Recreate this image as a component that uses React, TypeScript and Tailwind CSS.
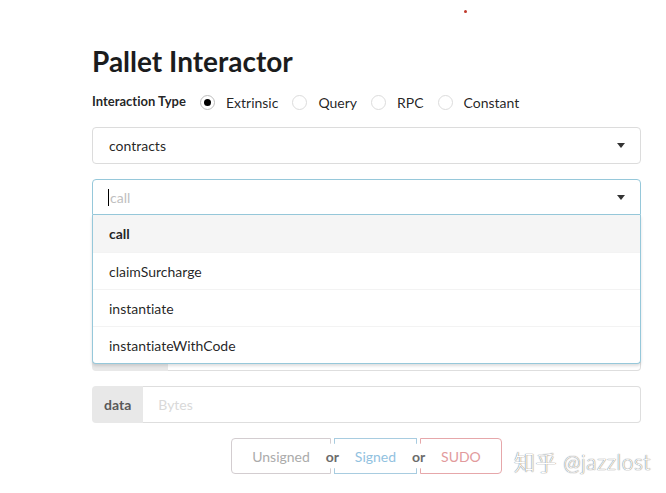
import React from 'react';

const methods = ['call', 'claimSurcharge', 'instantiate', 'instantiateWithCode'];
// args of contracts.call that sit under the open menu; only the boxes peek out
const hiddenArgs = ['w-[52px]', 'w-[58px]', 'w-[76px]'];

function Caret() {
    return (
        <svg className="h-[5px] w-[8px]" viewBox="0 0 8 5" fill="#333">
            <path d="M0 0h8L4 5z" />
        </svg>
    );
}

function Radio({ label, checked }: { label: string; checked?: boolean }) {
    return (
        <div className="flex items-center mr-[14px]">
            <span
                className={`flex h-[15px] w-[15px] items-center justify-center rounded-full border bg-white ${
                    checked ? 'border-[#bdbdbd]' : 'border-[#dcdcdc]'
                }`}
            >
                {checked && <span className="h-[7px] w-[7px] rounded-full bg-black" />}
            </span>
            <span className="ml-[11px] text-[14px]">{label}</span>
        </div>
    );
}

function LabeledInput({ label, placeholder, labelWidth }: { label?: string; placeholder?: string; labelWidth?: string }) {
    return (
        <div className="flex h-[37px] w-full">
            <div
                className={`flex items-center rounded-l-[4px] bg-[#e8e8e8] px-[12px] text-[14px] font-bold text-[#595959] ${
                    labelWidth ?? ''
                }`}
            >
                {label}
            </div>
            <div className="flex flex-1 items-center rounded-r-[4px] border border-l-0 border-[#dedede] px-[15px] text-[14px] text-[#d9d9d9]">
                {placeholder}
            </div>
        </div>
    );
}

function Or() {
    return (
        <div className="relative z-10 w-[3px]">
            <span className="absolute left-1/2 top-1/2 flex h-[25px] w-[25px] -translate-x-1/2 -translate-y-1/2 items-center justify-center rounded-full bg-white text-[14px] font-bold text-[#6b6b6b]">
                or
            </span>
        </div>
    );
}

export default function App() {
    return (
        <div className="relative min-h-[493px] w-[666px] overflow-hidden bg-white font-['Lato',_sans-serif] text-[rgba(0,0,0,0.87)] [font-variant-ligatures:none]">
            <span className="absolute left-[464px] top-[10px] h-[3px] w-[3px] rounded-full bg-[#c0392b]" />

            <div className="ml-[92px] w-[549px] pt-[43px]">
                <h1 className="text-[28px] font-bold leading-[36px] text-[#1b1c1d]">Pallet Interactor</h1>

                <div className="mt-[13px] flex h-[20px] items-center">
                    <span className="mr-[14px] text-[13px] font-bold">Interaction Type</span>
                    <Radio label="Extrinsic" checked />
                    <Radio label="Query" />
                    <Radio label="RPC" />
                    <Radio label="Constant" />
                </div>

                <div className="mt-[15px] flex flex-col gap-[15px]">
                    <div className="flex h-[37px] items-center justify-between rounded-[4px] border border-[#dcdcdc] pl-[16px] pr-[15px] text-[14px]">
                        <span>contracts</span>
                        <Caret />
                    </div>

                    <div className="relative z-20">
                        <div className="flex h-[36px] items-center justify-between rounded-t-[4px] border border-[#96c8da] pl-[15px] pr-[15px] text-[14px]">
                            <span className="flex items-center">
                                <span className="mr-[1px] h-[17px] w-[1px] bg-black" />
                                <span className="text-[#bfbfbf]">call</span>
                            </span>
                            <Caret />
                        </div>
                        <div className="absolute left-0 right-0 top-full rounded-b-[4px] border border-t-0 border-[#96c8da] bg-white shadow-[0_2px_3px_0_rgba(34,36,38,0.15)]">
                            {methods.map((m, i) => (
                                <div
                                    key={m}
                                    className={`flex h-[37px] items-center px-[16px] text-[14px] ${
                                        i === 0 ? 'bg-[#f5f5f5] font-bold' : 'border-t border-[#f3f3f3]'
                                    }`}
                                >
                                    {m}
                                </div>
                            ))}
                        </div>
                    </div>

                    {hiddenArgs.map((w) => (
                        <LabeledInput key={w} labelWidth={w} />
                    ))}
                    <LabeledInput label="data" placeholder="Bytes" />

                    <div className="flex justify-center">
                        <div className="flex h-[36px] text-[14px]">
                            <div className="flex items-center rounded-l-[4px] border border-[#d3cdd0] px-[20px] text-[#ababab]">
                                Unsigned
                            </div>
                            <Or />
                            <div className="flex items-center border border-[#a8cce0] px-[20px] text-[#92c2df]">
                                Signed
                            </div>
                            <Or />
                            <div className="flex items-center rounded-r-[4px] border border-[#e6a7aa] px-[20px] text-[#e29a9c]">
                                SUDO
                            </div>
                        </div>
                    </div>
                </div>
            </div>

            <div className="absolute left-[514px] top-[446px] font-['Lato','Noto_Sans_CJK_SC',sans-serif] text-[21px] font-light tracking-[0.5px] text-white [text-shadow:0_0_1px_#7a7a7a,0_0_1px_#7a7a7a]">
                知乎 @jazzlost
            </div>
        </div>
    );
}
